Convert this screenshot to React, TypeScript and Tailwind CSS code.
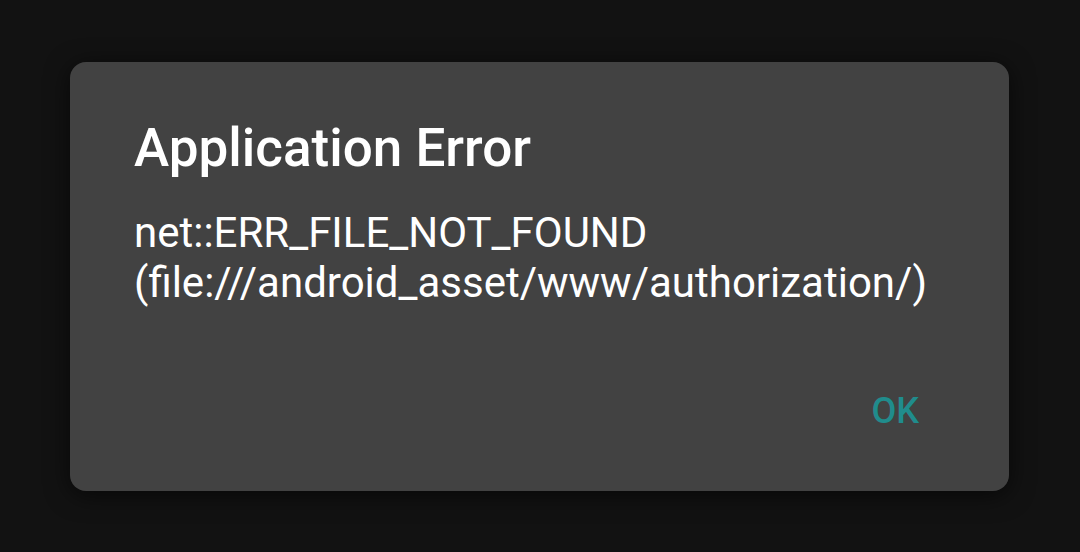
export default function App() {
  return (
    <div className="w-[1080px] h-[552px] bg-[#121212] pt-[62px] pl-[70px] font-['Roboto',sans-serif]">
      <div className="w-[939px] h-[429px] rounded-[16px] bg-[#424242] shadow-[0_4px_24px_rgba(0,0,0,0.6)] flex flex-col pl-[64px] pr-[90px]">
        <h1 className="mt-[56px] text-[53px] leading-[60px] font-medium text-white">
          Application Error
        </h1>
        <div className="mt-[30px] text-[42px] leading-[50px] text-white">
          <div>net::ERR_FILE_NOT_FOUND</div>
          <div>(file:///android_asset/www/authorization/)</div>
        </div>
        <div className="flex-1" />
        <div className="flex justify-end mb-[56px]">
          <button className="text-[36px] leading-[48px] font-medium text-[#208c8c]">OK</button>
        </div>
      </div>
    </div>
  );
}
